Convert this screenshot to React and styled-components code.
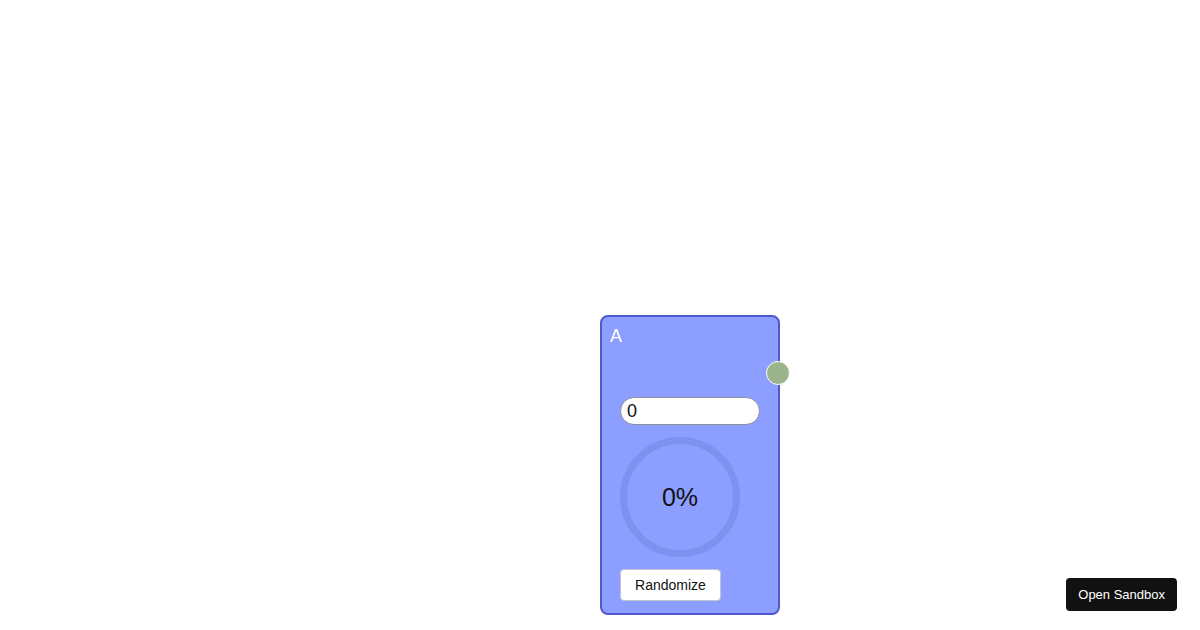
import React, { useState } from "react";
import styled, { createGlobalStyle } from "styled-components";

const Global = createGlobalStyle`
  html, body { margin: 0; padding: 0; background: #fff; }
  body { font-family: "Liberation Sans", Arial, sans-serif; }
  #root { width: 1200px; height: 630px; position: relative; overflow: hidden; }
`;

const Canvas = styled.div`
  position: relative;
  width: 1200px;
  height: 630px;
  background: #fff;
`;

const Node = styled.div`
  position: absolute;
  left: ${(p) => p.x}px;
  top: ${(p) => p.y}px;
  width: 180px;
  height: 300px;
  box-sizing: border-box;
  border: 2px solid #5158c9;
  border-radius: 8px;
  background: #8c9eff;
  display: flex;
  flex-direction: column;
`;

const Title = styled.div`
  height: 80px;
  box-sizing: border-box;
  padding: 8px 0 0 8px;
  color: #fff;
  font-size: 18px;
  line-height: 22px;
`;

const Handle = styled.div`
  position: absolute;
  right: -12px;
  top: 44px;
  width: 22px;
  height: 22px;
  border-radius: 50%;
  background: #9bb48c;
  border: 1px solid #fff;
`;

const Body = styled.div`
  display: flex;
  flex-direction: column;
  align-items: flex-start;
  gap: 12px;
  padding: 0 18px;
`;

const Input = styled.input`
  width: 140px;
  height: 28px;
  box-sizing: border-box;
  border: 1px solid #8f8f9a;
  border-radius: 14px;
  background: #fff;
  padding: 0 6px;
  font-family: "Liberation Sans", Arial, sans-serif;
  font-size: 18px;
  color: #111;
  outline: none;
`;

const Ring = styled.div`
  width: 120px;
  height: 120px;
  box-sizing: border-box;
  border-radius: 50%;
  border: 7px solid #7d91ee;
  display: flex;
  align-items: center;
  justify-content: center;
  font-size: 25px;
  color: #111;
`;

const Button = styled.button`
  width: 101px;
  height: 32px;
  box-sizing: border-box;
  background: #fff;
  border: 1px solid #c4c4cc;
  border-radius: 4px;
  font-family: "Liberation Sans", Arial, sans-serif;
  font-size: 14px;
  color: #111;
  cursor: pointer;
`;

const Sandbox = styled.button`
  position: absolute;
  right: 23px;
  bottom: 19px;
  height: 33px;
  padding: 0 12px;
  background: #111;
  color: #fff;
  border: none;
  border-radius: 4px;
  font-family: "Liberation Sans", Arial, sans-serif;
  font-size: 13px;
`;

export default function App() {
  const [value, setValue] = useState(0);
  return (
    <>
      <Global />
      <Canvas>
        <Node x={600} y={315}>
          <Title>A</Title>
          <Handle />
          <Body>
            <Input value={value} onChange={(e) => setValue(e.target.value)} />
            <Ring>{Math.round(Number(value) || 0)}%</Ring>
            <Button onClick={() => setValue(Math.floor(Math.random() * 100))}>
              Randomize
            </Button>
          </Body>
        </Node>
        <Sandbox>Open Sandbox</Sandbox>
      </Canvas>
    </>
  );
}
